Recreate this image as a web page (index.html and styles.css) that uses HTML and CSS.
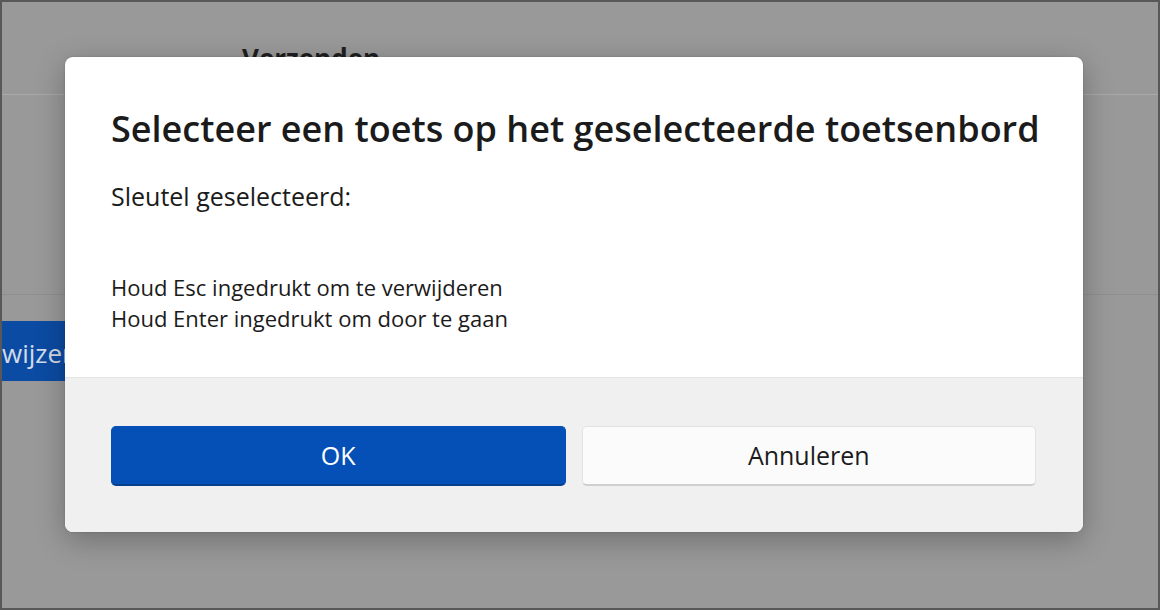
FILE: index.html
```html
<!DOCTYPE html>
<html lang="nl">
<head>
<meta charset="utf-8">
<title>Toets selecteren</title>
<link rel="stylesheet" href="styles.css">
</head>
<body>
<div class="screen">
  <div class="app">
    <div class="app-header">
      <span class="tab">Verzenden</span>
    </div>
    <div class="app-section"></div>
    <div class="app-actions">
      <button class="app-btn">wijzen</button>
    </div>
  </div>
  <div class="overlay">
    <div class="dialog" role="dialog">
      <div class="dialog-body">
        <h1 class="dialog-title">Selecteer een toets op het geselecteerde toetsenbord</h1>
        <p class="dialog-label">Sleutel geselecteerd:</p>
        <p class="dialog-hint">Houd Esc ingedrukt om te verwijderen<br>Houd Enter ingedrukt om door te gaan</p>
      </div>
      <div class="dialog-footer">
        <button class="btn btn-primary">OK</button>
        <button class="btn btn-secondary">Annuleren</button>
      </div>
    </div>
  </div>
</div>
</body>
</html>
```
FILE: styles.css
```css
html, body {
  margin: 0;
  padding: 0;
}
body {
  font-family: "Open Sans", "Noto Sans", "Liberation Sans", sans-serif;
  background: #555;
}
.screen {
  position: relative;
  width: 1160px;
  height: 610px;
  box-sizing: border-box;
  border: 2px solid #585858;
  background: #999999;
  overflow: hidden;
}
.app {
  display: flex;
  flex-direction: column;
  height: 100%;
}
.app-header {
  height: 93px;
  border-bottom: 1px solid #a9a9a9;
  padding-left: 240px;
  box-sizing: border-box;
  padding-top: 38px;
  line-height: 36px;
}
.tab {
  font-size: 26px;
  font-weight: 700;
  color: #1f1f1f;
}
.app-section {
  height: 199px;
  border-bottom: 1px solid #8f8f8f;
}
.app-actions {
  padding-top: 26px;
}
.app-btn {
  display: block;
  width: 150px;
  height: 60px;
  border: 0;
  background: #0b4ba3;
  color: #d3dbe8;
  font-family: inherit;
  font-size: 26px;
  text-align: left;
  padding: 4px 0 0 0;
}
.overlay {
  position: absolute;
  left: 63px;
  top: 55px;
}
.dialog {
  width: 1018px;
  height: 475px;
  border-radius: 8px;
  overflow: hidden;
  background: #ffffff;
  box-shadow: 0 8px 30px rgba(0, 0, 0, 0.28), 0 0 2px rgba(0, 0, 0, 0.2);
  display: flex;
  flex-direction: column;
}
.dialog-body {
  height: 321px;
  box-sizing: border-box;
  padding: 48px 46px 0;
  border-bottom: 1px solid #e3e3e3;
}
.dialog-title {
  margin: 0;
  font-size: 36px;
  font-weight: 600;
  line-height: 48px;
  color: #1b1b1b;
  white-space: nowrap;
}
.dialog-label {
  margin: 26px 0 0;
  font-size: 25px;
  line-height: 34px;
  color: #1b1b1b;
}
.dialog-hint {
  margin: 59px 0 0;
  font-size: 22px;
  line-height: 31px;
  color: #1b1b1b;
}
.dialog-footer {
  flex: 1;
  background: #f0f0f0;
  display: flex;
  gap: 16px;
  padding: 48px 47px 0 46px;
}
.btn {
  flex: 1;
  height: 60px;
  border-radius: 5px;
  font-family: inherit;
  font-size: 25px;
  box-sizing: border-box;
  padding: 0 0 2px;
}
.btn-primary {
  background: #0550b6;
  color: #ffffff;
  border: 1px solid #0550b6;
  border-bottom: 2px solid #063f8e;
}
.btn-secondary {
  background: #fbfbfb;
  color: #1b1b1b;
  border: 1px solid #e2e2e2;
  border-bottom: 2px solid #cfcfcf;
}
```
